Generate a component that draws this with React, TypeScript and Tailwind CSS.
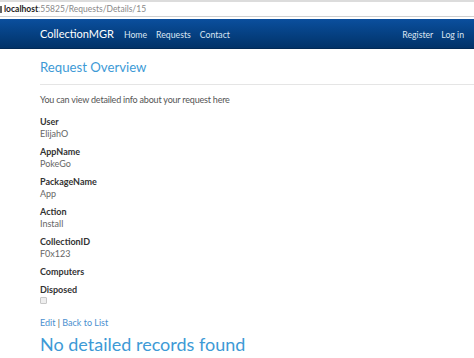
import React from 'react';

const fields: { label: string; value?: string }[] = [
  { label: 'User', value: 'ElijahO' },
  { label: 'AppName', value: 'PokeGo' },
  { label: 'PackageName', value: 'App' },
  { label: 'Action', value: 'Install' },
  { label: 'CollectionID', value: 'F0x123' },
  { label: 'Computers' },
];

export default function App() {
  return (
    <div className="w-[474px] h-[358px] overflow-hidden bg-white font-['Lato',sans-serif] text-[#333]">
      {/* address bar */}
      <div className="h-[17px] border-t-2 border-[#dcdcdc] border-b border-b-[#d0d0d0] flex items-center text-[8.5px] leading-none">
        <span className="w-[2px] h-[7px] bg-[#666] mr-[2px]" />
        <span className="text-[#222] font-bold">localhost</span>
        <span className="text-[#888]">:55825/Requests/Details/15</span>
      </div>

      {/* navbar */}
      <nav className="mt-[2px] h-[30px] bg-gradient-to-b from-[#0b4f9e] to-[#023369] border-b border-[#022a56] flex items-center pl-[40px] pr-[10px] pt-[2px] text-white">
        <span className="text-[11px] mr-[10px]">CollectionMGR</span>
        <div className="flex gap-[9px] text-[8.7px] text-[#dbe6f3]">
          <span>Home</span>
          <span>Requests</span>
          <span>Contact</span>
        </div>
        <div className="ml-auto flex gap-[8px] text-[8.7px] text-[#dbe6f3]">
          <span>Register</span>
          <span>Log in</span>
        </div>
      </nav>

      {/* content */}
      <div className="pl-[40px]">
        <h2 className="mt-[8px] text-[13.2px] text-[#3d9ad6] leading-[20px]">Request Overview</h2>
        <hr className="mt-[7px] border-[#e5e5e5]" />
        <p className="mt-[9px] text-[9px] tracking-[-0.2px] text-[#555] leading-[12px]">
          You can view detailed info about your request here
        </p>

        <dl className="mt-[10px] text-[9px] leading-[12px]">
          {fields.map((f) => (
            <div key={f.label} className="mb-[6px]">
              <dt className="font-bold text-[#333]">{f.label}</dt>
              {f.value && <dd className="text-[#666]">{f.value}</dd>}
            </div>
          ))}
          <div>
            <dt className="font-bold text-[#333]">Disposed</dt>
            <dd className="pt-[1px]">
              <span className="block w-[7px] h-[7px] border border-[#c8c8c8] bg-[#eee] rounded-[1px]" />
            </dd>
          </div>
        </dl>

        <p className="mt-[13px] text-[9px] leading-[12px] text-[#4a8fcf]">
          <span>Edit</span> <span className="text-[#555]">|</span> <span>Back to List</span>
        </p>
        <h2 className="mt-[3px] text-[18px] leading-[24px] text-[#3d9ad6]">No detailed records found</h2>
      </div>
    </div>
  );
}
